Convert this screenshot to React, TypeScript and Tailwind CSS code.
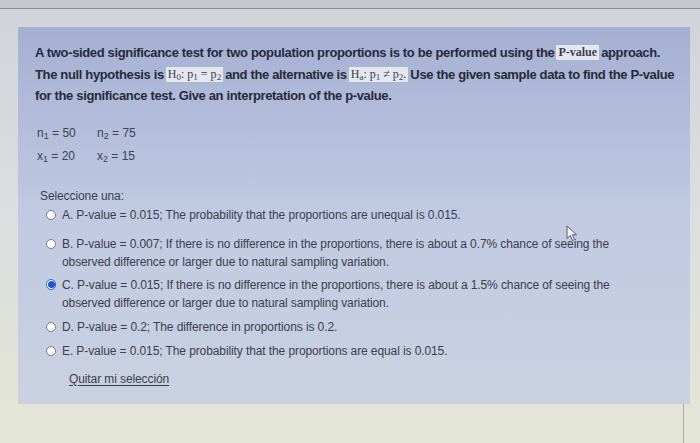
import type { ReactNode } from "react"

function MathBox({ children, bold }: { children: ReactNode; bold?: boolean }) {
  return (
    <span
      className={`mx-[2px] inline-block rounded-[1px] bg-[#e4e7ee] px-[2px] align-[1px] font-['Liberation_Serif',serif] text-[12px] leading-[15px] tracking-normal text-[#3a3e4e] ${
        bold ? "font-bold" : "font-normal"
      }`}
    >
      {children}
    </span>
  )
}

function Radio({ checked }: { checked?: boolean }) {
  if (checked) {
    return (
      <span className="flex h-[11px] w-[11px] items-center justify-center rounded-full border border-[#2a62cf] bg-white">
        <span className="h-[7px] w-[7px] rounded-full bg-[#1d58cc]" />
      </span>
    )
  }
  return <span className="h-[10px] w-[10px] rounded-full border-[1.5px] border-[#767983] bg-white" />
}

const options = [
  {
    id: "a",
    lines: ["A. P-value = 0.015; The probability that the proportions are unequal is 0.015."],
    mt: "mt-[1px]",
  },
  {
    id: "b",
    lines: [
      "B. P-value = 0.007; If there is no difference in the proportions, there is about a 0.7% chance of seeing the",
      "observed difference or larger due to natural sampling variation.",
    ],
    mt: "mt-[11px]",
  },
  {
    id: "c",
    lines: [
      "C. P-value = 0.015; If there is no difference in the proportions, there is about a 1.5% chance of seeing the",
      "observed difference or larger due to natural sampling variation.",
    ],
    checked: true,
    mt: "mt-[5px]",
  },
  {
    id: "d",
    lines: ["D. P-value = 0.2; The difference in proportions is 0.2."],
    mt: "mt-[6px]",
  },
  {
    id: "e",
    lines: ["E. P-value = 0.015; The probability that the proportions are equal is 0.015."],
    mt: "mt-[6px]",
  },
]

export default function App() {
  return (
    <div className="relative h-[443px] w-[700px] overflow-hidden bg-gradient-to-b from-[#d1d3da] via-[#dcdedf] to-[#e4e6d5] font-['Liberation_Sans',Arial,sans-serif]">
      <div className="h-[9px] border-b border-[#8d9098] bg-[#c5c7cd]" />

      <div className="ml-[18px] mt-[18px] h-[377px] w-[672px] bg-gradient-to-b from-[#a5afd2] via-[#c1cae2] to-[#c9d1e1] pl-[17px] pt-[15px]">
        {/* question */}
        <p className="whitespace-nowrap text-[13px] font-bold leading-[21.5px] tracking-[-0.35px] text-[#272a3a]">
          A two-sided significance test for two population proportions is to be performed using the
          <MathBox bold>P-value</MathBox>
          approach.
          <br />
          The null hypothesis is
          <MathBox>
            H<sub>0</sub>: p<sub>1</sub> = p<sub>2</sub>
          </MathBox>
          and the alternative is
          <MathBox>
            H<sub>a</sub>: p<sub>1</sub> ≠ p<sub>2</sub>.
          </MathBox>
          Use the given sample data to find the P-value
          <br />
          for the significance test. Give an interpretation of the p-value.
        </p>

        {/* sample data */}
        <div className="mt-[15px] pl-[2px] text-[12px] leading-[23px] text-[#3e4150]">
          <div className="flex">
            <span className="w-[60px]">
              n<sub>1</sub> = 50
            </span>
            <span>
              n<sub>2</sub> = 75
            </span>
          </div>
          <div className="flex">
            <span className="w-[60px]">
              x<sub>1</sub> = 20
            </span>
            <span>
              x<sub>2</sub> = 15
            </span>
          </div>
        </div>

        {/* answers */}
        <div className="mt-[19px] pl-[5px] text-[12px] leading-[18px] tracking-[-0.1px] text-[#3b3e4d]">
          <div>Seleccione una:</div>
          {options.map((o) => (
            <div key={o.id} className={`flex items-start ${o.mt}`}>
              <span className="ml-[6px] flex h-[18px] w-[10px] items-center">
                <Radio checked={o.checked} />
              </span>
              <div className="ml-[6px] whitespace-nowrap">
                {o.lines.map((l) => (
                  <div key={l}>{l}</div>
                ))}
              </div>
            </div>
          ))}
          <div className="ml-[29px] mt-[10px]">
            <a className="text-[#3b3e4d] underline underline-offset-2">Quitar mi selección</a>
          </div>
        </div>
      </div>

      {/* mouse pointer on screen */}
      <svg
        className="absolute left-[566px] top-[225px]"
        width="12"
        height="17"
        viewBox="0 0 12 17"
      >
        <path
          d="M1 1 L1 13.5 L4.3 10.6 L6.6 15.6 L8.6 14.7 L6.4 9.8 L10.6 9.8 Z"
          fill="#eef0f6"
          stroke="#5b5e68"
          strokeWidth="1"
          strokeLinejoin="round"
        />
      </svg>

      {/* edge of monitor content */}
      <div className="absolute bottom-0 left-[683px] top-[404px] w-px bg-[#a9aba4]" />
    </div>
  )
}
